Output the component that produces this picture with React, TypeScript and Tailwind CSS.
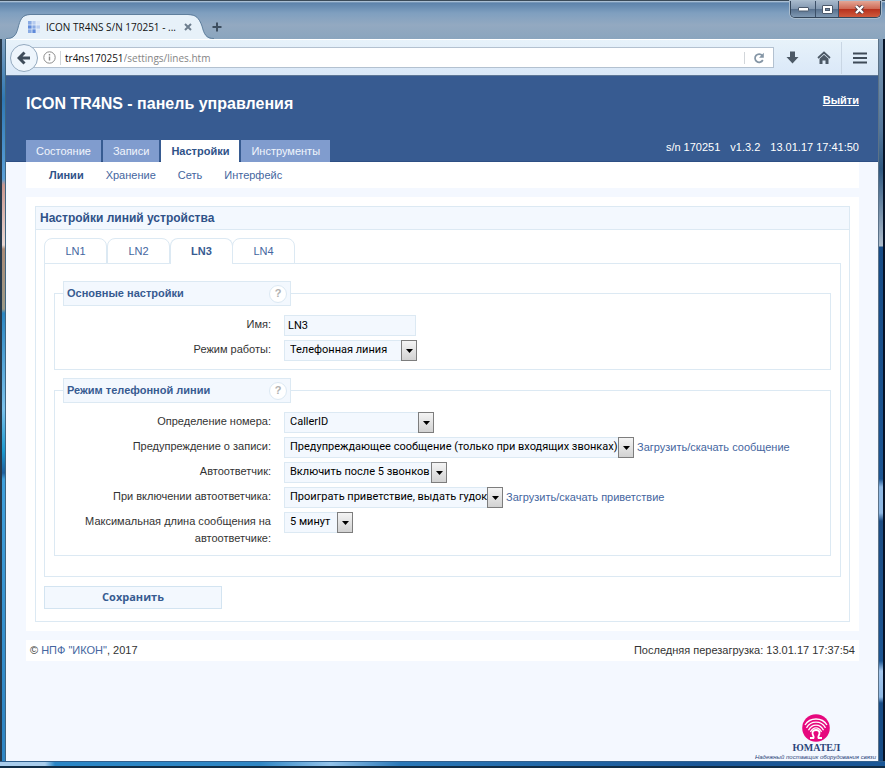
import { useState } from "react";
import type { ReactNode } from "react";

const mainTabs = ["Состояние", "Записи", "Настройки", "Инструменты"];
const subTabs = ["Линии", "Хранение", "Сеть", "Интерфейс"];
const lines = ["LN1", "LN2", "LN3", "LN4"];

function TitleBar() {
  return (
    <div className="relative flex h-[39px] items-end justify-between border-t border-[#3a4a58] bg-[linear-gradient(180deg,#c3d3e2_0px,#5d83ab_2px,#7f9fbf_12px,#93a9c1_24px,#8aa5be_38px)]">
      <div className="relative ml-1.5 flex h-[25px] w-[240px] items-center pl-5">
        <svg className="absolute left-0 top-0" width="208" height="25" viewBox="0 0 208 25">
          <path
            d="M0 25 C7 25 10 22 12 14 C14 6 16 1 24 1 H182 C190 1 193 4 196 12 C198 20 200 25 207 25 Z"
            fill="#e7f1f9"
          />
          <path
            d="M0 24.5 C7 24.5 10 22 12 14 C14 6 16 .5 24 .5 H182 C190 .5 193 4 196 12 C198 20 200 24.5 208 24.5"
            fill="none"
            stroke="#5f7f9d"
          />
        </svg>
        <svg className="relative ml-0.5 shrink-0" width="12" height="12" viewBox="0 0 12 12">
          <rect width="12" height="12" fill="#dbe6f7" />
          <path d="M0 0h4v4H0zM0 8h4v4H0zM4 4h4v4H4z" fill="#88aae3" />
          <path d="M0 4h4v4H0zM4 8h4v4H4z" fill="#5f8ada" />
          <path d="M4 0h4v4H4zM8 4h4v4H8z" fill="#b6cbef" />
          <path d="M4 0v12M8 0v12M0 4h12M0 8h12" stroke="#eef4fb" strokeWidth=".7" />
        </svg>
        <span className="relative ml-1.5 w-[138px] shrink-0 whitespace-nowrap font-['Open_Sans',sans-serif] text-[10px] leading-4 text-[#111]">
          ICON TR4NS S/N 170251 - ...
        </span>
        <button aria-label="Закрыть вкладку" className="relative py-1">
          <svg width="8" height="8" viewBox="0 0 8 8">
            <path d="M1 1l6 6M7 1L1 7" stroke="#6d7e8e" strokeWidth="2" />
          </svg>
        </button>
        <button aria-label="Новая вкладка" className="relative ml-auto mr-5 p-1">
          <svg width="10" height="10" viewBox="0 0 10 10">
            <path d="M5 .5v9M.5 5h9" stroke="#3d4e60" strokeWidth="2" />
          </svg>
        </button>
      </div>
      <div className="mr-1 flex h-[17px] self-start overflow-hidden rounded-b-[5px] border border-t-0 border-[#34465a] shadow-[0_0_0_1px_#a9bccd]">
        <button
          aria-label="Свернуть"
          className="flex w-[25px] items-center justify-center border-r border-[#3c5068] bg-[linear-gradient(180deg,#a5b7ca,#8298b0_48%,#566f8c_50%,#7f98b2)]"
        >
          <svg width="11" height="5" viewBox="0 0 11 5">
            <rect x=".5" y=".5" width="10" height="3.5" rx=".5" fill="#fff" stroke="#4b596b" />
          </svg>
        </button>
        <button
          aria-label="Развернуть"
          className="flex w-[23px] items-center justify-center border-r border-[#3c5068] bg-[linear-gradient(180deg,#a5b7ca,#8298b0_48%,#566f8c_50%,#7f98b2)]"
        >
          <svg width="11" height="9" viewBox="0 0 11 9">
            <rect x=".5" y=".5" width="10" height="8" rx=".5" fill="#fff" stroke="#4b596b" />
            <rect x="3.5" y="3.5" width="4" height="2" fill="#6f86a0" stroke="#4b596b" />
          </svg>
        </button>
        <button
          aria-label="Закрыть"
          className="flex w-[41px] items-center justify-center bg-[linear-gradient(180deg,#e3a695,#cf6a55_48%,#b6301c_50%,#cf5a3d)]"
        >
          <svg width="11" height="9" viewBox="0 0 11 9">
            <path d="M2 1l7 7M9 1L2 8" stroke="#4f3a42" strokeWidth="4" />
            <path d="M2 1l7 7M9 1L2 8" stroke="#fff" strokeWidth="2.4" />
          </svg>
        </button>
      </div>
    </div>
  );
}

function Toolbar() {
  return (
    <div className="flex h-[37px] items-center border-b border-t border-b-[#5d7797] border-t-white bg-linear-to-b from-[#e7f2fa] to-[#dae8f8] pl-1">
      <button
        aria-label="Назад"
        className="relative z-10 flex size-7 shrink-0 items-center justify-center rounded-full border border-[#93a9bf] bg-[#eef5fc]"
      >
        <svg width="14" height="14" viewBox="0 0 14 14">
          <path d="M7.5 1.5L2 7l5.500 5.500M2.500 7H13" fill="none" stroke="#3f4c5a" strokeWidth="3" />
        </svg>
      </button>
      <div className="-ml-2 flex h-[21px] grow items-center border border-[#b3c1d0] bg-white pl-3">
        <svg className="shrink-0" width="13" height="13" viewBox="0 0 13 13">
          <circle cx="6.500" cy="6.500" r="5.700" fill="none" stroke="#8a8a8a" />
          <path d="M6.500 5.600v4M6.500 3v1.500" stroke="#8a8a8a" strokeWidth="1.400" />
        </svg>
        <span className="mx-1 h-3.5 w-px bg-[#d2d6da]" />
        <label htmlFor="address" className="font-['Open_Sans',sans-serif] text-[10px] leading-4 text-[#111]">
          tr4ns170251
        </label>
        <input
          id="address"
          defaultValue="/settings/lines.htm"
          className="h-4 min-w-0 grow bg-transparent font-['Open_Sans',sans-serif] text-[10px] leading-4 text-[#858585] outline-none"
        />
        <button aria-label="Обновить" className="border-l border-[#d2d6da] px-2">
          <svg width="12" height="12" viewBox="0 0 12 12">
            <path d="M9.300 3.600A4.100 4.100 0 1 0 9.800 8" fill="none" stroke="#8495a5" strokeWidth="1.700" />
            <path d="M10.800 .8v5H6z" fill="#8495a5" />
          </svg>
        </button>
      </div>
      <button aria-label="Загрузки" className="ml-3 shrink-0">
        <svg width="13" height="13" viewBox="0 0 13 13">
          <path d="M4 .5h5V6h3.500L6.500 12.500.5 6H4z" fill="#4c5966" />
        </svg>
      </button>
      <button aria-label="Домой" className="ml-[18px] shrink-0">
        <svg width="14" height="13" viewBox="0 0 14 13">
          <path d="M1 7l6-5.500L13 7" fill="none" stroke="#4c5966" strokeWidth="1.700" />
          <path d="M2.500 7.800L7 3.800l4.500 4V13H8.500V9.500h-3V13h-3z" fill="#4c5966" />
        </svg>
      </button>
      <span className="ml-2.5 h-8 w-px bg-[#c9d6e4]" />
      <button aria-label="Меню" className="mx-[11px] shrink-0">
        <svg width="14" height="12" viewBox="0 0 14 12">
          <path d="M0 1.500h14M0 6h14M0 10.500h14" stroke="#3f4b58" strokeWidth="2.200" />
        </svg>
      </button>
    </div>
  );
}

function Header() {
  const [active, setActive] = useState("Настройки");
  return (
    <header className="border-b border-[#2d4f84] bg-[#375b91] px-5 pr-[19px] text-white">
      <div className="flex items-start justify-between pt-4">
        <h1 className="pt-px text-base font-bold leading-[22px]">ICON TR4NS - панель управления</h1>
        <a href="#logout" className="text-[11px] font-bold leading-4 underline">
          Выйти
        </a>
      </div>
      <div className="mt-[25px] flex items-start justify-between">
        <nav className="-mb-px flex gap-0.5">
          {mainTabs.map((tab) => (
            <button
              key={tab}
              onClick={() => setActive(tab)}
              className={
                tab === active
                  ? "h-[22px] bg-white px-2.5 text-[11px] font-bold text-[#2f5288]"
                  : "h-[22px] bg-[#809cce] px-2.5 text-[11px] text-[#f1f5fc]"
              }
            >
              {tab}
            </button>
          ))}
        </nav>
        <div className="flex gap-2.5 text-[11px] leading-[15px]">
          <span>s/n 170251</span>
          <span>v1.3.2</span>
          <span>13.01.17 17:41:50</span>
        </div>
      </div>
    </header>
  );
}

function Fieldset({ title, children }: { title: string; children: ReactNode }) {
  return (
    <fieldset className="min-w-0 border border-[#dce9f3] px-2">
      <legend className="flex h-[25px] w-[228px] items-center justify-between border border-[#dce9f3] bg-[#f3f8fe] px-[3px] text-[11px] font-bold text-[#375b91]">
        {title}
        <button
          type="button"
          aria-label="Справка"
          className="flex size-[18px] items-center justify-center rounded-full border border-[#dce9f3] bg-white text-[11px] text-[#b0b0b0]"
        >
          ?
        </button>
      </legend>
      {children}
    </fieldset>
  );
}

function Row({ id, label, children }: { id: string; label: string; children: ReactNode }) {
  return (
    <div className="flex min-h-[25px] items-start">
      <label htmlFor={id} className="w-[209px] shrink-0 pr-px pt-px text-right text-[11px] leading-[17px] text-[#333]">
        {label}
      </label>
      <div className="ml-3 flex items-center gap-[3px] text-[11px] text-[#4566a0]">{children}</div>
    </div>
  );
}

function Select({ id, value, width }: { id: string; value: string; width: string }) {
  return (
    <div className={`relative h-[21px] shrink-0 ${width}`}>
      <select
        id={id}
        className="h-full w-full appearance-none border border-[#dce9f3] bg-[#f3f8fe] pl-[5px] font-['Roboto',sans-serif] text-[11px] text-black"
      >
        <option>{value}</option>
      </select>
      <span className="pointer-events-none absolute inset-y-0 right-0 flex w-4 items-center justify-center border border-[#7d7d7d] bg-linear-to-b from-[#f4f4f4] to-[#d2d2d2]">
        <svg width="7" height="4" viewBox="0 0 7 4">
          <path d="M0 0h7L3.500 4z" fill="#000" />
        </svg>
      </span>
    </div>
  );
}

function LineSettings() {
  const [line, setLine] = useState("LN3");
  return (
    <section className="mt-[9px] bg-white p-[9px]">
      <div className="border border-[#dce9f3]">
        <h2 className="border-b border-[#dce9f3] bg-[#f3f8fe] pl-1 text-xs font-bold leading-[22px] text-[#2f5288]">
          Настройки линий устройства
        </h2>
        <form className="px-2 pb-3 pt-2" onSubmit={(e) => e.preventDefault()}>
          <div className="relative z-10 -mb-px flex">
            {lines.map((name) => (
              <button
                key={name}
                type="button"
                onClick={() => setLine(name)}
                className={
                  name === line
                    ? "-mr-px h-[26px] w-[63px] rounded-t-lg border border-b-0 border-[#dce9f3] bg-white text-[11px] font-bold text-[#375b91]"
                    : "h-[26px] w-[63px] rounded-t-lg border border-[#dce9f3] bg-white text-[11px] text-[#4566a0]"
                }
              >
                {name}
              </button>
            ))}
          </div>
          <div className="border border-[#dce9f3] px-[9px] pb-5 pt-[17px]">
            <Fieldset title="Основные настройки">
              <div className="pb-1 pt-[9px]">
                <Row id="name" label="Имя:">
                  <input
                    id="name"
                    defaultValue={line}
                    className="h-[21px] w-[132px] border border-[#dce9f3] bg-[#f3f8fe] pl-[3px] font-['Roboto',sans-serif] text-[11px] text-black"
                  />
                </Row>
                <Row id="mode" label="Режим работы:">
                  <Select id="mode" value="Телефонная линия" width="w-[133px]" />
                </Row>
              </div>
            </Fieldset>
            <div className="mt-2">
              <Fieldset title="Режим телефонной линии">
                <div className="pb-2 pt-[9px]">
                  <Row id="caller" label="Определение номера:">
                    <Select id="caller" value="CallerID" width="w-[150px]" />
                  </Row>
                  <Row id="warning" label="Предупреждение о записи:">
                    <Select
                      id="warning"
                      value="Предупреждающее сообщение (только при входящих звонках)"
                      width="w-[350px]"
                    />
                    <a href="#message">Загрузить/скачать сообщение</a>
                  </Row>
                  <Row id="answer" label="Автоответчик:">
                    <Select id="answer" value="Включить после 5 звонков" width="w-[163px]" />
                  </Row>
                  <Row id="greeting" label="При включении автоответчика:">
                    <Select id="greeting" value="Проиграть приветствие, выдать гудок" width="w-[219px]" />
                    <a href="#greeting-file">Загрузить/скачать приветствие</a>
                  </Row>
                  <Row id="length" label="Максимальная длина сообщения на автоответчике:">
                    <Select id="length" value="5 минут" width="w-[69px]" />
                  </Row>
                </div>
              </Fieldset>
            </div>
          </div>
          <button
            type="submit"
            className="mt-[9px] block h-[23px] w-[178px] border border-[#d3e4f1] bg-[#f3f8fe] font-['Open_Sans',sans-serif] text-[11px] font-bold text-[#375b91]"
          >
            Сохранить
          </button>
        </form>
      </div>
    </section>
  );
}

function PartnerLogo() {
  return (
    <div className="ml-auto mt-auto flex flex-col items-center">
      <svg width="28" height="28" viewBox="0 0 28 28">
        <circle cx="14" cy="14" r="13.800" fill="#e6087e" />
        <g fill="none" stroke="#fff" strokeWidth="1.300">
          <path d="M3 11C8 3 20 3 25 11" />
          <path d="M4.500 13.800C9 6.300 19 6.300 23.500 13.800" />
          <path d="M6.500 16.300C10 9.500 18 9.500 21.500 16.300" />
          <path d="M8.500 18C11 12.500 17 12.500 19.500 18" />
        </g>
        <path
          d="M8 24h3.500c1-1.500-1-2.800-1-4.800 0-4.300 7-4.300 7 0 0 2-2 3.300-1 4.800H20"
          fill="none"
          stroke="#fff"
          strokeWidth="1.800"
        />
      </svg>
      <div className="font-['Liberation_Serif',serif] text-[10px] font-bold leading-3 text-[#2b4479]">ЮМАТЕЛ</div>
      <div className="whitespace-nowrap pr-0.5 text-[6px] italic leading-[7px] text-[#2b4479]">
        Надежный поставщик оборудования связи
      </div>
    </div>
  );
}

export default function App() {
  return (
    <div className="flex min-h-screen flex-col bg-[#1f5f9c] font-['Liberation_Sans',Arial,sans-serif]">
      <TitleBar />
      <div className="flex grow">
        <div className="w-1.5 shrink-0 border-l-2 border-r border-l-[#26394b] border-r-[#3f6580] bg-[linear-gradient(180deg,#7d9fc0_0px,#2f78b4_60px,#5ba0d8_140px,#c9978f_146px,#e8d8d4_206px,#a98b78_210px,#9c9a88_270px,#2b86c2_274px,#7cc2ec_370px,#1c9ad0_412px,#1e5f9d_434px,#3fa0dc_440px,#2f86c4_680px)]" />
        <div className="flex min-w-0 grow flex-col bg-[#f4f8ff]">
          <Toolbar />
          <Header />
          <main className="ml-5 mr-[19px]">
            <nav className="flex gap-[22px] bg-white pl-[23px] text-[11px] leading-[26px] text-[#4566a0]">
              {subTabs.map((tab) => (
                <a key={tab} href="#settings" className={tab === "Линии" ? "font-bold text-[#2f5288]" : ""}>
                  {tab}
                </a>
              ))}
            </nav>
            <LineSettings />
            <footer className="mt-[9px] flex justify-between bg-white px-1 text-[11px] leading-[21px] text-[#333]">
              <span>
                ©{" "}
                <a href="#company" className="text-[#4566a0]">
                  НПФ "ИКОН"
                </a>
                , 2017
              </span>
              <span>Последняя перезагрузка: 13.01.17 17:37:54</span>
            </footer>
          </main>
          <PartnerLogo />
        </div>
        <div className="w-[7px] shrink-0 border-l border-r-2 border-l-[#5b7288] border-r-[#071327] bg-[linear-gradient(180deg,#7c98b4_0px,#54779b_90px,#2f5880_130px,#aebdcc_207px,#174c86_208px,#1c5592_440px,#8fb9e4_448px,#8fb9e4_474px,#1c4d84_482px,#1c5592_622px,#a5c8ee_632px,#8fb9e4_658px,#174c86_664px)]" />
      </div>
      <div className="h-[7px] border-b-2 border-t border-b-[#102c45] border-t-[#315f8d] bg-[linear-gradient(90deg,#a9cdec_0px,#a9cdec_45px,#2a86c6_55px,#2f86c4_260px,#93c3ea_330px,#2a78b8_400px,#1a5797_700px)]" />
    </div>
  );
}
